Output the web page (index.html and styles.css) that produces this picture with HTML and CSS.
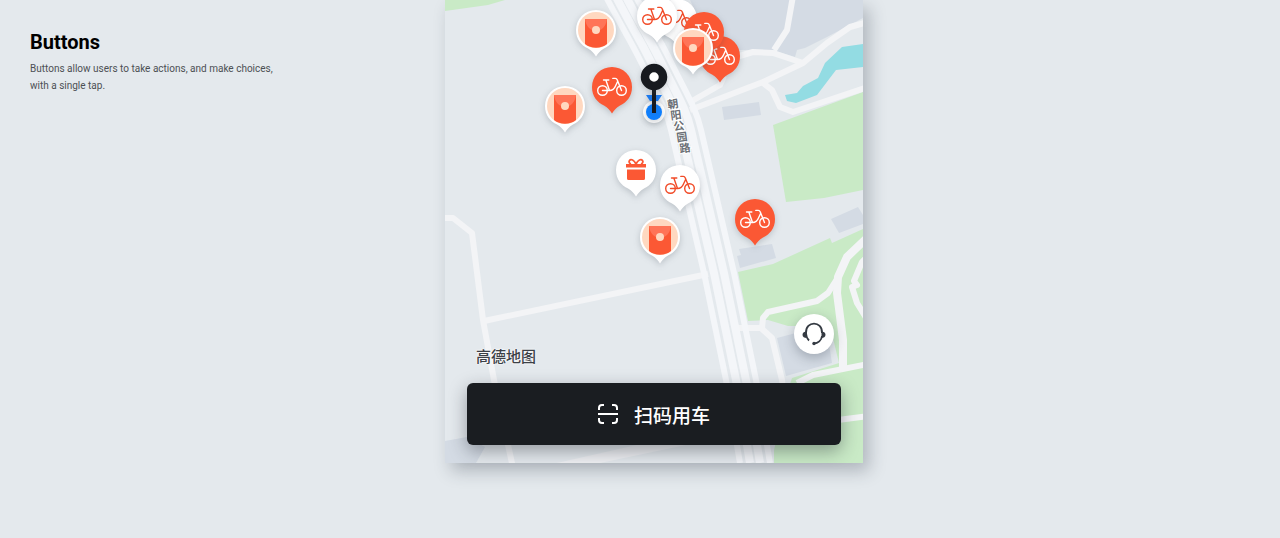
FILE: index.html
```html
<!DOCTYPE html>
<html lang="en">
<head>
    <meta charset="UTF-8">
    <meta name="viewport" content="width=device-width, initial-scale=1.0">
    <title>Buttons</title>
    <link rel="stylesheet" href="styles.css">
</head>
<body>
    <main class="showcase">
        <section class="intro">
            <h2>Buttons</h2>
            <p>Buttons allow users to take actions, and make choices, with a single tap.</p>
        </section>

        <section class="phone" lang="zh-CN">
            <svg class="map" viewBox="445 0 418 463" preserveAspectRatio="xMidYMin slice">
                <defs>
                    <path id="pin" d="M0 -20A20 20 0 0 1 20 0C20 9.500 14.500 15.500 8 18.500C4 20.500 2 23.500 0 26.500C-2 23.500 -4 20.500 -8 18.500C-14.500 15.500 -20 9.500 -20 0A20 20 0 0 1 0 -20Z"/>
                    <g id="bike" fill="none" stroke="currentColor" stroke-width="1.400" stroke-linecap="round" stroke-linejoin="round">
                        <circle cx="-9.500" cy="3.500" r="4.800"/>
                        <circle cx="9.500" cy="3.500" r="4.800"/>
                        <path d="M-9.500 3.500H-2.500L-6 -6.500M-8.500 -7H-3.200M-2.500 3.500C1 3.500 2.500 1.500 3.500 -1L5.600 -5.500M0.800 -8.600H3.200C4.400 -8.600 4.900 -8 5.300 -7L9.500 3.500"/>
                    </g>
                    <g id="packet">
                        <use href="#pin" fill="#fff"/>
                        <circle r="18" fill="#ffd8c0"/>
                        <path fill="#fb5834" d="M-11 -11H11V14C5 19 -5 19 -11 14Z"/>
                        <path fill="#ff7457" d="M-11 -11H11C10 -3 5 1 0 1S-10 -3 -11 -11Z"/>
                        <circle r="4" fill="#ffd8c0"/>
                    </g>
                    <g id="bike-red"><use href="#pin" fill="#fb5834"/><use href="#bike" color="#fff"/></g>
                    <g id="bike-white"><use href="#pin" fill="#fff"/><use href="#bike" color="#f14b28"/></g>
                    <path id="avenue" d="M608 -30C626 10 643 35 656 62C672 95 681 108 686 130L719 273L741 380L755 463"/>
                </defs>

                <!-- parks and water -->
                <path class="park" d="M445 0H505L488 5L445 11Z"/>
                <path class="park" d="M773 125L863 92V190L824 198L786 202Z"/>
                <path class="park" d="M738 272L773 264L830 238L832 243L863 229V463H774V450L790 384L792 378L839 363L830 326H788L768 320L748 321Z"/>
                <path class="water" d="M785 95L797 93L803 86L818 78L825 63L842 47L863 44V67L836 70L817 95L796 103L787 101Z"/>

                <!-- buildings -->
                <path class="block" d="M690 0H863V18L827 37L805 48L797 50L795 57L773 50L740 50L716 56Z"/>
                <path class="block" d="M722 107L759 102L761 115L724 120Z"/>
                <path class="block" d="M739 249L772 244L776 258L740 268L737 256L741 255Z"/>
                <path class="block" d="M831 219L858 207L863 215V224L839 233Z"/>
                <path class="block" d="M777 338L826 325L832 363L786 376Z"/>
                <path class="block" d="M445 441L467 437L485 447L476 463H445Z"/>

                <!-- streets -->
                <g class="street">
                    <path d="M440 218H453L472 233L483 320L494 380L513 468"/>
                    <path d="M484 321L708 274"/>
                    <path d="M690 110L763 82L803 63L827 43L850 27L868 22"/>
                    <path d="M692 101L720 85L724 76"/>
                    <path d="M736 57L753 52L773 53L803 63M774 50L787 30L793 -4"/>
                    <path d="M763 83L772 90L780 107L793 112L823 102L868 87"/>
                    <path d="M736 328H762L763 318L768 312L817 301L828 293L837 279"/>
                    <path d="M762 329L772 338L782 380L788 430"/>
                    <path class="wide" d="M868 237L847 257L838 277L837 293L843 340L843 368"/>
                    <path d="M868 256L862 262L854 281L857 285L852 287L857 303L868 321"/>
                    <path d="M797 383L813 375L868 364M838 420L868 416"/>
                </g>
                <path class="lane" d="M557 463L650 442H700L600 463Z"/>

                <!-- avenue: four carriageways -->
                <g class="avenue">
                    <use href="#avenue" x="-15" stroke-width="6"/>
                    <use href="#avenue" x="-5" stroke-width="8"/>
                    <use href="#avenue" x="5" stroke-width="8"/>
                    <use href="#avenue" x="15" stroke-width="6"/>
                </g>

                <g class="road-name">
                    <text x="673" y="108" transform="rotate(-8 673 104)">朝</text>
                    <text x="676" y="119" transform="rotate(-8 676 115)">阳</text>
                    <text x="679" y="130" transform="rotate(-8 679 126)">公</text>
                    <text x="682" y="141" transform="rotate(-8 682 137)">园</text>
                    <text x="685" y="152" transform="rotate(-8 685 148)">路</text>
                </g>

                <!-- markers -->
                <g class="markers">
                    <use href="#bike-white" x="677" y="19"/>
                    <use href="#bike-red" x="720" y="56"/>
                    <use href="#bike-red" x="704" y="32"/>
                    <use href="#bike-white" x="657" y="16"/>
                    <use href="#packet" x="693" y="48"/>
                    <use href="#packet" x="596" y="30"/>
                    <use href="#bike-red" x="612" y="87"/>
                    <use href="#packet" x="565" y="106"/>
                    <use href="#bike-white" x="680" y="185"/>
                    <use href="#packet" x="660" y="237"/>
                    <use href="#bike-red" x="755" y="219"/>
                    <g transform="translate(636 170)">
                        <use href="#pin" fill="#fff"/>
                        <path fill="#fb5834" d="M-10 -6H10V-2.500H-10ZM-9 -0.500H9V8.500Q9 10 7.500 10H-7.500Q-9 10 -9 8.500Z"/>
                        <path fill="none" stroke="#fb5834" stroke-width="1.800" d="M0 -6C-2 -10 -5 -11.500 -6.500 -9.500C-7.500 -8 -6.500 -6.500 -5 -6M0 -6C2 -10 5 -11.500 6.500 -9.500C7.500 -8 6.500 -6.500 5 -6"/>
                    </g>
                </g>

                <!-- current position -->
                <g class="markers">
                    <circle cx="654" cy="112" r="11" fill="#fff"/>
                    <path fill="#1a7cf5" d="M646 95H662L658 101H650Z"/>
                    <circle cx="654" cy="112" r="8" fill="#0f80ff"/>
                    <path stroke="#171a1f" stroke-width="4" d="M654 88V113"/>
                    <circle cx="654" cy="77" r="9" fill="#fff" stroke="#171a1f" stroke-width="8.500"/>
                </g>
            </svg>

            <span class="map-brand">高德地图</span>

            <button class="support" type="button" aria-label="客服">
                <svg viewBox="0 0 24 24" width="24" height="24" fill="none" stroke="#343a42" stroke-width="1.800">
                    <path d="M4 11C3.500 -1.500 20.500 -1.500 20 11M20 14C19.500 18.500 16 21.500 12 21.500"/>
                    <path d="M4 10C4 14 5 16.500 7 18.500"/>
                    <path fill="#343a42" stroke="none" d="M4.500 9.500V16C2.500 16 0.500 15 0.500 12.700S2.500 9.500 4.500 9.500ZM19.500 9.500V16C21.500 16 23.500 15 23.500 12.700S21.500 9.500 19.500 9.500Z"/>
                    <circle cx="12" cy="21.500" r="1.700" fill="#343a42" stroke="none"/>
                </svg>
            </button>

            <button class="scan" type="button">
                <svg viewBox="0 0 20 20" width="20" height="20" fill="none" stroke="#fff" stroke-width="2">
                    <path d="M1 6V4Q1 1 4 1H6M14 1H16Q19 1 19 4V6M19 14V16Q19 19 16 19H14M6 19H4Q1 19 1 16V14M0 10H20"/>
                </svg>
                <span>扫码用车</span>
            </button>
        </section>
    </main>
</body>
</html>
```
FILE: styles.css
```css
body {
    margin: 0;
    min-height: 100vh;
    background: #e4e9ed;
    color: #000;
    font-family: "Roboto", "Noto Sans CJK SC", sans-serif;
}

.showcase {
    display: grid;
    grid-template-columns: 445fr 418px 417fr;
    align-items: start;
    padding-bottom: 40px;
}

/* Description on the left */
.intro {
    max-width: 260px;
    padding: 30px;
}

.intro h2 {
    margin: 0 0 6px;
    font-size: 20px;
    line-height: 24px;
}

.intro p {
    margin: 0;
    font-size: 10px;
    line-height: 17px;
    color: #4c5054;
}

/* Map screen */
.phone {
    position: relative;
    background: #e4e9ed;
    box-shadow: 6px 8px 16px rgba(40, 50, 65, 0.28);
}

.map {
    display: block;
    width: 100%;
}

.park {
    fill: #c9eac6;
}

.water {
    fill: #93dce3;
}

.block {
    fill: #d4dbe4;
}

.street {
    fill: none;
    stroke: #f3f4f6;
    stroke-width: 6;
    stroke-linejoin: round;
}

.street .wide {
    stroke-width: 8;
}

.lane {
    fill: #eff0f3;
}

.avenue {
    fill: none;
    stroke: #f4f6f9;
}

.road-name {
    fill: #6b7076;
    stroke: #fff;
    stroke-width: 2;
    paint-order: stroke;
    font-size: 11px;
    font-weight: 700;
    text-anchor: middle;
}

.markers > * {
    filter: drop-shadow(0 2px 3px rgba(60, 70, 85, 0.25));
}

.map-brand {
    position: absolute;
    left: 31px;
    bottom: 96px;
    font-size: 15px;
    font-weight: 500;
    line-height: 20px;
    color: #3c4147;
    text-shadow: 0 0 2px #fff, 0 0 2px #fff;
}

/* Buttons over the map */
.support {
    position: absolute;
    right: 29px;
    bottom: 109px;
    display: grid;
    place-items: center;
    width: 40px;
    height: 40px;
    padding: 0;
    border: 0;
    border-radius: 50%;
    background: #fff;
    box-shadow: 0 4px 12px rgba(40, 50, 65, 0.3);
}

.scan {
    position: absolute;
    left: 22px;
    right: 22px;
    bottom: 18px;
    display: flex;
    align-items: center;
    justify-content: center;
    gap: 16px;
    height: 62px;
    padding: 0;
    border: 0;
    border-radius: 6px;
    background: #1a1d21;
    color: #fff;
    font-family: inherit;
    font-size: 19px;
    font-weight: 500;
    box-shadow: 0 6px 18px rgba(30, 35, 45, 0.4);
}
```
